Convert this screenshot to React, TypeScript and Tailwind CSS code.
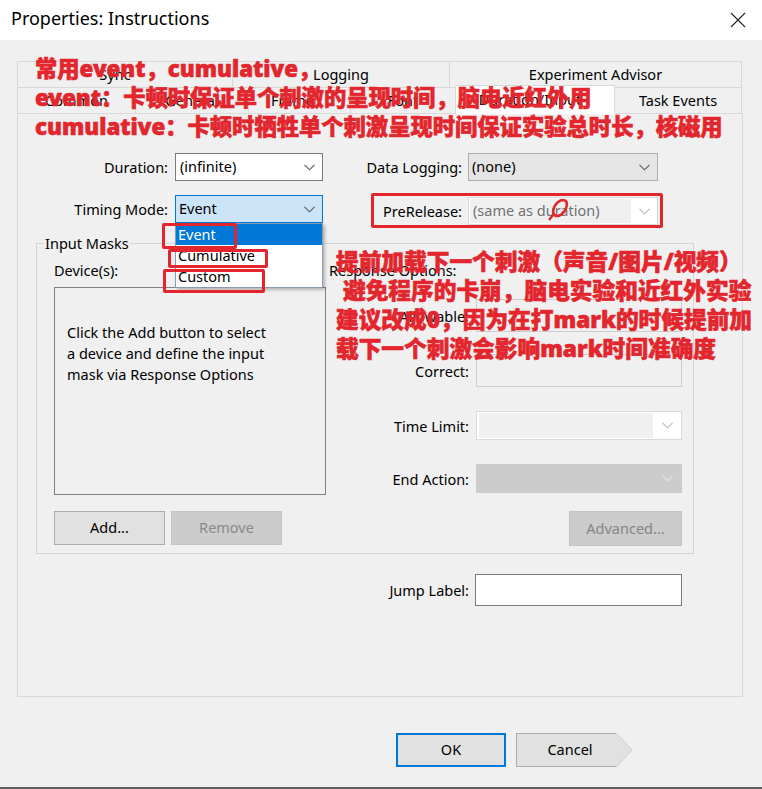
import React from "react";

const UI = "'Noto Sans', 'Liberation Sans', sans-serif";
const RED = "'Noto Sans', 'Noto Sans CJK SC', sans-serif";

function Chevron({ color = "#5a5a5a" }: { color?: string }) {
  return (
    <svg width="11" height="7" viewBox="0 0 11 7" fill="none">
      <path d="M0.5 0.8 L5.5 5.8 L10.5 0.8" stroke={color} strokeWidth="1.1" />
    </svg>
  );
}

function Label({ w, children }: { w: string; children: React.ReactNode }) {
  return <div className={`${w} text-right leading-[20px] whitespace-nowrap`}>{children}</div>;
}

export default function App() {
  return (
    <div
      className="relative w-[762px] h-[789px] bg-[#f0f0f0] flex flex-col overflow-hidden text-[14.5px] text-black"
      style={{ fontFamily: UI }}
    >
      {/* Title bar */}
      <div className="h-[40px] bg-white flex items-center justify-between pl-[11px] pr-[16px] pb-[4px]">
        <div className="text-[18px] leading-[24px]">Properties: Instructions</div>
        <svg width="16" height="16" viewBox="0 0 16 16" className="mt-[4px]">
          <path d="M1 1 L15 15 M15 1 L1 15" stroke="#222" strokeWidth="1.1" />
        </svg>
      </div>

      {/* Body */}
      <div className="pl-[17px] flex flex-col">
        {/* Tabs */}
        <div className="mt-[21px] flex h-[26px]">
          <div className="w-[215px] border-t border-l border-[#d9d9d9] flex items-center justify-center pr-[20px]">Sync</div>
          <div className="w-[217px] border-t border-l border-[#d9d9d9] flex items-center justify-center">Logging</div>
          <div className="w-[293px] border-t border-l border-r border-[#d9d9d9] flex items-center justify-center">Experiment Advisor</div>
        </div>
        <div className="flex h-[26px] relative z-10">
          <div className="w-[118px] border-t border-l border-[#d9d9d9] flex items-center justify-center">Common</div>
          <div className="w-[113px] border-t border-l border-[#d9d9d9] flex items-center justify-center">General</div>
          <div className="w-[102px] border-t border-l border-[#d9d9d9] flex items-center justify-center pr-[14px]">Frame</div>
          <div className="w-[105px] border-t border-l border-[#d9d9d9] flex items-center justify-center">Font</div>
          <div className="w-[160px] -mt-[2px] h-[29px] bg-white border-t border-l border-r border-[#d9d9d9] flex items-center justify-center pr-[10px]">Duration/Input</div>
          <div className="w-[127px] border-t border-r border-[#d9d9d9] flex items-center justify-center">Task Events</div>
        </div>

        {/* Panel */}
        <div className="w-[726px] h-[584px] border border-[#d9d9d9] bg-[#f0f0f0] flex flex-col">
          {/* Row 1 */}
          <div className="mt-[39px] flex items-center h-[28px]">
            <Label w="w-[150px]">Duration:</Label>
            <div className="ml-[7px] w-[148px] h-[28px] bg-white border border-[#7a7a7a] flex items-center justify-between pl-[4px] pr-[7px]">
              <span>(infinite)</span>
              <Chevron />
            </div>
            <Label w="w-[139px]">Data Logging:</Label>
            <div className="ml-[6px] w-[190px] h-[28px] bg-[#e5e5e5] border border-[#adadad] flex items-center justify-between pl-[3px] pr-[7px]">
              <span>(none)</span>
              <Chevron />
            </div>
          </div>

          {/* Row 2 */}
          <div className="mt-[14px] flex items-center h-[28px]">
            <Label w="w-[150px]">Timing Mode:</Label>
            <div className="ml-[7px] w-[148px] h-[28px] bg-[#cce4f7] border border-[#0078d7] flex items-center justify-between pl-[3px] pr-[7px]">
              <span>Event</span>
              <Chevron />
            </div>
            <div className="mt-[4px] flex items-center">
              <Label w="w-[139px]">PreRelease:</Label>
              <div className="ml-[6px] w-[190px] h-[28px] bg-white border border-[#d9d9d9] flex items-center">
                <div className="ml-[1px] w-[161px] h-[24px] bg-[#f0f0f0] flex items-center pl-[3px] text-[#707070] whitespace-nowrap">(same as duration)</div>
                <div className="flex-1 flex justify-center">
                  <Chevron color="#b5b5b5" />
                </div>
              </div>
            </div>
          </div>

          {/* Input Masks group */}
          <div className="relative ml-[18px] mt-[20px] w-[658px] h-[311px] border border-[#d5d5d5] flex">
            <div className="absolute left-[7px] -top-[11px] px-[1px] bg-[#f0f0f0] leading-[20px]">Input Masks</div>

            {/* Left column */}
            <div className="ml-[17px] w-[272px] flex flex-col">
              <div className="mt-[16px] leading-[20px]">Device(s):</div>
              <div className="mt-[7px] h-[208px] border border-[#828282] bg-[#f0f0f0] pl-[12px] pt-[34px] leading-[21px]">
                <div>Click the Add button to select</div>
                <div>a device and define the input</div>
                <div>mask via Response Options</div>
              </div>
              <div className="mt-[16px] flex gap-[6px]">
                <div className="w-[111px] h-[34px] bg-[#e1e1e1] border border-[#adadad] flex items-center justify-center">Add...</div>
                <div className="w-[111px] h-[34px] bg-[#cccccc] border border-[#c4c4c4] flex items-center justify-center text-[#8a8a8a]">Remove</div>
              </div>
            </div>

            {/* Right column */}
            <div className="ml-[3px] w-[353px] flex flex-col">
              <div className="mt-[16px] leading-[20px]">Response Options:</div>
              <div className="mt-[19px] flex items-center h-[33px]">
                <Label w="w-[140px]">Allowable:</Label>
                <div className="ml-[7px] w-[206px] h-[33px] bg-[#f0f0f0] border border-[#cccccc]" />
              </div>
              <div className="mt-[22px] flex items-center h-[33px]">
                <Label w="w-[140px]">Correct:</Label>
                <div className="ml-[7px] w-[206px] h-[33px] bg-[#f0f0f0] border border-[#cccccc]" />
              </div>
              <div className="mt-[24px] flex items-center h-[29px]">
                <Label w="w-[140px]">Time Limit:</Label>
                <div className="ml-[7px] w-[206px] h-[29px] bg-white border border-[#d9d9d9] flex items-center">
                  <div className="ml-[2px] w-[174px] h-[25px] bg-[#f0f0f0]" />
                  <div className="flex-1 flex justify-center">
                    <Chevron color="#b5b5b5" />
                  </div>
                </div>
              </div>
              <div className="mt-[24px] flex items-center h-[29px]">
                <Label w="w-[140px]">End Action:</Label>
                <div className="ml-[7px] w-[206px] h-[29px] bg-[#cccccc] border border-[#cccccc] flex items-center justify-end pr-[8px]">
                  <Chevron color="#e4e4e4" />
                </div>
              </div>
              <div className="mt-[18px] flex justify-end">
                <div className="w-[113px] h-[35px] bg-[#cccccc] border border-[#c4c4c4] flex items-center justify-center text-[#858585]">Advanced...</div>
              </div>
            </div>
          </div>

          {/* Jump Label */}
          <div className="mt-[20px] flex items-center h-[32px]">
            <Label w="w-[451px]">Jump Label:</Label>
            <div className="ml-[6px] w-[207px] h-[32px] bg-white border border-[#7a7a7a]" />
          </div>
        </div>

        {/* OK / Cancel */}
        <div className="mt-[36px] ml-[379px] flex">
          <div className="w-[110px] h-[34px] bg-[#e1e1e1] border-2 border-[#0078d7] flex items-center justify-center">OK</div>
          <div className="relative ml-[10px] w-[101px] h-[34px] bg-[#e1e1e1] border border-r-0 border-[#adadad] flex items-center justify-center pl-[6px]">
            Cancel
            <svg width="17" height="34" viewBox="0 0 17 34" className="absolute -right-[16px] -top-[1px]">
              <polygon points="0,0 1,0 16,17 1,34 0,34" fill="#e1e1e1" />
              <path d="M0 0.5 L1 0.5 L16 17 L1 33.5 L0 33.5" stroke="#d2d2d2" strokeWidth="1" fill="none" />
            </svg>
          </div>
        </div>
      </div>

      <div className="mt-auto h-[2px] bg-[#5e5e5e]" />

      {/* Dropdown list (open) */}
      <div className="absolute z-20 left-[175px] top-[223px] w-[148px] h-[65px] bg-white border border-[#8a9bb0] shadow-[2px_2px_3px_rgba(0,0,0,0.25)] flex flex-col">
        <div className="h-[21px] bg-[#0078d7] text-white pl-[2px] leading-[21px]">Event</div>
        <div className="h-[21px] pl-[2px] leading-[21px]">Cumulative</div>
        <div className="h-[21px] pl-[2px] leading-[21px]">Custom</div>
      </div>

      {/* Red annotation boxes */}
      <div className="absolute z-30 left-[162px] top-[223px] w-[75px] h-[26px] border-[3px] border-[#e3262d] rounded-[2px]" />
      <div className="absolute z-30 left-[168px] top-[249px] w-[100px] h-[19px] border-[3px] border-[#e3262d] rounded-[2px]" />
      <div className="absolute z-30 left-[163px] top-[269px] w-[102px] h-[24px] border-[3px] border-[#e3262d] rounded-[2px]" />
      <div className="absolute z-30 left-[371px] top-[193px] w-[292px] h-[35px] border-[3px] border-[#e3262d] rounded-[2px]" />
      <svg width="30" height="28" viewBox="0 0 30 28" className="absolute z-30 left-[544px] top-[196px]">
        <ellipse cx="16" cy="12" rx="5.5" ry="9" transform="rotate(35 16 12)" stroke="#e3262d" strokeWidth="2.6" fill="none" />
        <path d="M9 19 L5 24" stroke="#e3262d" strokeWidth="2.4" />
      </svg>

      {/* Red annotation text - left/top */}
      <div
        className="absolute z-30 left-[35px] top-[54px] text-[22.3px] leading-[29px] font-black text-[#e3262d] whitespace-nowrap [-webkit-text-stroke:0.6px_#e3262d]"
        style={{ fontFamily: RED }}
      >
        <div>常用event，cumulative，</div>
        <div>event：卡顿时保证单个刺激的呈现时间，脑电近红外用</div>
        <div>cumulative：卡顿时牺牲单个刺激呈现时间保证实验总时长，核磁用</div>
      </div>

      {/* Red annotation text - right */}
      <div
        className="absolute z-30 left-[336px] top-[247px] text-[22.7px] leading-[29px] font-black text-[#e3262d] whitespace-nowrap [-webkit-text-stroke:0.6px_#e3262d]"
        style={{ fontFamily: RED }}
      >
        <div>提前加载下一个刺激（声音/图片/视频）</div>
        <div className="ml-[7px]">避免程序的卡崩，脑电实验和近红外实验</div>
        <div>建议改成0，因为在打mark的时候提前加</div>
        <div>载下一个刺激会影响mark时间准确度</div>
      </div>
    </div>
  );
}
